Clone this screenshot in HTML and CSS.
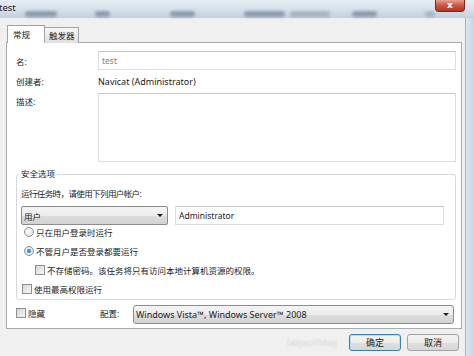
FILE: index.html
```html
<!DOCTYPE html>
<html>
<head>
    <meta charset="utf-8">
    <title>test</title>
    <link rel="stylesheet" href="styles.css">
</head>
<body>
    <div class="window">
        <div class="titlebar">
            <span class="title">test</span>
            <span class="haze haze-a"></span>
            <span class="haze haze-b"></span>
            <span class="haze haze-c"></span>
            <span class="haze haze-d"></span>
            <span class="haze haze-e"></span>
            <span class="haze haze-f"></span>
            <span class="haze haze-g"></span>
            <button class="close">x</button>
        </div>
        <div class="frame">
            <div class="client">
                <div class="tabs">
                    <div class="tab active">常规</div>
                    <div class="tab">触发器</div>
                </div>
                <div class="panel">
                    <div class="field-row">
                        <label class="field-label">名:</label>
                        <input class="text-input name-input" type="text" value="test">
                    </div>
                    <div class="field-row creator-row">
                        <span class="field-label">创建者:</span>
                        <span class="creator">Navicat (Administrator)</span>
                    </div>
                    <div class="field-row desc-row">
                        <label class="field-label">描述:</label>
                        <textarea class="text-input desc-input"></textarea>
                    </div>

                    <fieldset class="group">
                        <legend>安全选项</legend>
                        <div class="hint">运行任务時，请使用下列用户帐户:</div>
                        <div class="account-row">
                            <div class="combo user-combo"><span>用户</span><span class="arrow"></span></div>
                            <input class="text-input account-input" type="text" value="Administrator">
                        </div>
                        <div class="options">
                            <div class="option"><span class="radio"></span>只在用户登录时运行</div>
                            <div class="option"><span class="radio checked"></span>不管月户是否登录都要运行</div>
                            <div class="option sub"><span class="check"></span>不存储密码。该任务将只有访问本地计算机资源的权限。</div>
                            <div class="option"><span class="check"></span>使用最高权限运行</div>
                        </div>
                    </fieldset>

                    <div class="bottom-row">
                        <div class="hide-opt"><span class="check"></span>隐藏</div>
                        <span class="config-label">配置:</span>
                        <div class="combo config-combo"><span>Windows Vista™, Windows Server™ 2008</span><span class="arrow"></span></div>
                    </div>
                </div>
                <div class="buttons">
                    <span class="watermark">https://blog</span>
                    <button class="btn default">确定</button>
                    <button class="btn">取消</button>
                </div>
            </div>
            <div class="edge"></div>
        </div>
    </div>
</body>
</html>
```

FILE: styles.css
```css
body {
    margin: 0;
    padding: 0;
    font-family: "Noto Sans", "Noto Sans CJK SC", sans-serif;
    font-size: 8.5px;
    color: #222222;
}
.window {
    width: 474px;
    height: 356px;
    overflow: hidden;
}
.titlebar {
    display: flex;
    align-items: flex-start;
    height: 18px;
    background: linear-gradient(to bottom, #e6edf4 0%, #d6e0ea 55%, #c2cfdd 100%);
}
.title {
    margin-left: -1px;
    margin-top: 2px;
    font-size: 9.5px;
    line-height: 12px;
    color: #1c1c1c;
}
.haze {
    height: 6px;
    margin-top: 11px;
    border-radius: 3px;
    background: #8192a7;
    filter: blur(1.8px);
    opacity: 0.85;
}
.haze-a { width: 32px; margin-left: 9px; }
.haze-b { width: 15px; margin-left: 38px; }
.haze-c { width: 25px; margin-left: 60px; }
.haze-d { width: 41px; margin-left: 49px; }
.haze-e { width: 40px; margin-left: 5px; opacity: 0.5; }
.haze-f { width: 25px; margin-left: 22px; }
.haze-g { width: 10px; margin-left: 48px; opacity: 0.5; }
.close {
    margin-left: auto;
    margin-right: 9px;
    width: 30px;
    height: 12px;
    padding: 0;
    border: 1px solid #7a2a20;
    border-top: none;
    border-radius: 0 0 4px 4px;
    background: linear-gradient(to bottom, #e3a093 0%, #cf5a45 45%, #b23421 100%);
    color: #ffffff;
    font-family: "DejaVu Sans", sans-serif;
    font-size: 9px;
    font-weight: bold;
    line-height: 9px;
}
.frame {
    display: flex;
    height: 338px;
}
.client {
    width: 465px;
    box-sizing: border-box;
    padding: 7px 3px 0 6px;
    background: #f0f0f0;
}
.edge {
    flex: 1;
    border-left: 1px solid #a2b0bf;
    background: linear-gradient(to right, #dde7f1, #c6d5e5);
}
.tabs {
    display: flex;
    align-items: flex-end;
    margin-bottom: -1px;
    position: relative;
    z-index: 1;
}
.tab {
    height: 15px;
    line-height: 15px;
    padding: 0 3px 0 4px;
    border: 1px solid #9fa3aa;
    border-bottom: none;
    border-left: none;
    background: linear-gradient(to bottom, #f7f7f7, #e0e0e0);
}
.tab.active {
    height: 17px;
    line-height: 17px;
    width: 31px;
    padding: 0 0 0 5px;
    margin-left: 1px;
    border-left: 1px solid #9fa3aa;
    background: #ffffff;
}
.panel {
    width: 456px;
    box-sizing: border-box;
    padding: 8px 5px 4px 9px;
    border: 1px solid #a8abb0;
    background: #ffffff;
}
.field-row {
    display: flex;
    align-items: center;
}
.field-label {
    width: 82px;
    flex-shrink: 0;
}
.text-input {
    box-sizing: border-box;
    margin: 0;
    padding: 0 3px;
    border: 1px solid #dadde2;
    border-top-color: #c4c6cb;
    background: #ffffff;
    font-family: "Noto Sans", sans-serif;
    font-size: 8.5px;
    color: #222222;
    outline: none;
}
.name-input {
    width: 358px;
    height: 19px;
    color: #808080;
}
.creator-row {
    margin-top: 2px;
    height: 18px;
}
.creator {
    font-size: 9px;
}
.desc-row {
    margin-top: 3px;
    align-items: flex-start;
}
.desc-row .field-label {
    padding-top: 2px;
}
.desc-input {
    width: 358px;
    height: 69px;
    resize: none;
}
.group {
    margin: 6px 0 0 0;
    padding: 0 4px 4px 4px;
    border: 1px solid #d6d9dc;
    border-radius: 3px;
    min-width: 0;
}
.group legend {
    padding: 0 2px;
    margin-left: -2px;
    line-height: 12px;
}
.hint {
    margin-top: 8px;
    line-height: 12px;
    letter-spacing: -0.6px;
}
.account-row {
    display: flex;
    margin-top: 6px;
}
.combo {
    display: flex;
    align-items: center;
    justify-content: space-between;
    box-sizing: border-box;
    height: 19px;
    padding: 0 4px 0 2px;
    border: 1px solid #8c8c8c;
    border-radius: 2px;
    background: linear-gradient(to bottom, #f4f4f4 0%, #ececec 50%, #dddddd 51%, #d3d3d3 100%);
}
.arrow {
    width: 0;
    height: 0;
    border-left: 3px solid transparent;
    border-right: 3px solid transparent;
    border-top: 3px solid #1e1e1e;
}
.user-combo {
    width: 147px;
}
.account-input {
    width: 269px;
    height: 19px;
    margin-left: 7px;
}
.options {
    display: flex;
    flex-direction: column;
    gap: 6px;
}
.option {
    display: flex;
    align-items: center;
    height: 13px;
}
.radio {
    width: 8px;
    height: 8px;
    margin: 0 2px 0 3px;
    border: 1px solid #8e9296;
    border-radius: 50%;
    background: radial-gradient(circle at 40% 40%, #ffffff, #d8d8d8);
}
.radio.checked {
    background: radial-gradient(circle, #2e7fbd 0%, #5aa7db 35%, #e6eef4 45%, #d0d6db 100%);
}
.check {
    width: 8px;
    height: 8px;
    margin: 0 2px 0 1px;
    border: 1px solid #8f8f8f;
    background: linear-gradient(to bottom right, #d6d6d6, #f7f7f7);
}
.option.sub .check {
    margin-left: 14px;
}
.bottom-row {
    display: flex;
    align-items: center;
    margin-top: 5px;
}
.hide-opt {
    display: flex;
    align-items: center;
    width: 84px;
    margin-top: -4px;
}
.hide-opt .check {
    margin-left: 0;
}
.config-label {
    width: 33px;
    margin-top: -3px;
}
.config-combo {
    flex: 1;
    margin-right: 2px;
    padding-left: 2px;
    border-radius: 3px;
    font-size: 9px;
}
.buttons {
    display: flex;
    justify-content: flex-end;
    align-items: center;
    gap: 6px;
    margin-top: 5px;
    padding-right: 3px;
}
.watermark {
    margin-right: 6px;
    white-space: nowrap;
    font-size: 9px;
    color: rgba(255, 255, 255, 0.85);
    text-shadow: 0 0 1px rgba(120, 120, 120, 0.6);
}
.btn {
    width: 52px;
    height: 17px;
    padding: 0;
    border: 1px solid #a3a3a3;
    border-radius: 3px;
    background: linear-gradient(to bottom, #f4f4f4 0%, #ececec 50%, #dfdfdf 51%, #d6d6d6 100%);
    font-family: "Noto Sans CJK SC", sans-serif;
    font-size: 9px;
    color: #222222;
}
.btn.default {
    border-color: #3c7fb1;
    box-shadow: inset 0 0 0 1px #b6def5;
}
```
